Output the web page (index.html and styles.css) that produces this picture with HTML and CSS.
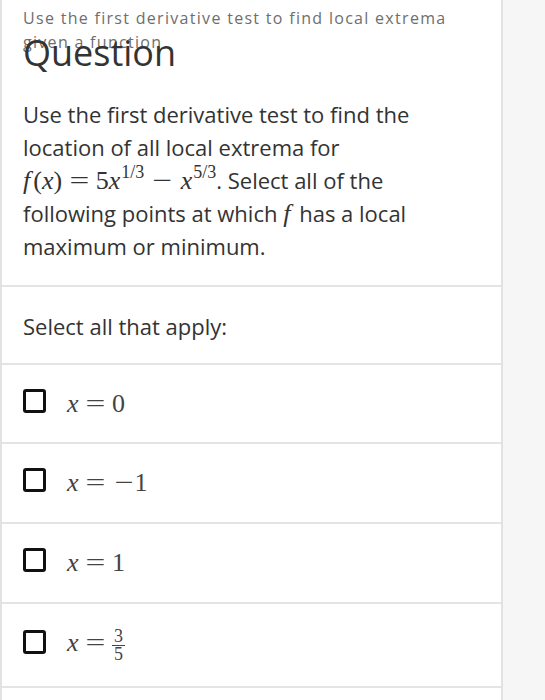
FILE: index.html
```html
<!DOCTYPE html>
<html lang="en">
<head>
    <meta charset="UTF-8">
    <meta name="viewport" content="width=device-width, initial-scale=1.0">
    <title>Question</title>
    <link rel="stylesheet" href="styles.css">
</head>
<body>
    <div class="page">
        <!-- Question block -->
        <section class="panel question">
            <div class="topic">Use the first derivative test to find local extrema given a function</div>
            <h1 class="heading">Question</h1>
            <p class="prompt">
                Use the first derivative test to find the location of all local extrema for
                <span class="math formula"><i class="fn">f</i>(<i>x</i>)<span class="op">=</span>5<i>x</i><sup>1/3</sup><span class="op bin">−</span><i>x</i><sup>5/3</sup></span>. Select all of the following points at which <span class="math"><i class="fn">f</i></span> has a local maximum or minimum.
            </p>
        </section>

        <!-- Answer choices -->
        <section class="panel instructions">
            <p>Select all that apply:</p>
        </section>
        <label class="panel choice first">
            <span class="box"></span>
            <span class="math"><i>x</i><span class="op">=</span>0</span>
        </label>
        <label class="panel choice">
            <span class="box"></span>
            <span class="math"><i>x</i><span class="op">=</span><span class="minus">−</span>1</span>
        </label>
        <label class="panel choice">
            <span class="box"></span>
            <span class="math"><i>x</i><span class="op">=</span>1</span>
        </label>
        <label class="panel choice last">
            <span class="box"></span>
            <span class="math"><i>x</i><span class="op">=</span><span class="frac"><span>3</span><span class="den">5</span></span></span>
        </label>
    </div>
</body>
</html>
```

FILE: styles.css
```css
/* Reset */
* {
    margin: 0;
    padding: 0;
    box-sizing: border-box;
}
body {
    font-family: "Open Sans", Arial, sans-serif;
    background-color: #f6f6f6;
    color: #333;
}
.page {
    width: 503px;
    background-color: #fff;
    border-left: 2px solid #e2e2e2;
    border-right: 2px solid #e2e2e2;
    min-height: 700px;
}
/* Panels */
.panel {
    display: block;
    border-bottom: 2px solid #e4e4e4;
    padding: 0 21px;
}
.question {
    height: 287px;
    padding-top: 6px;
    padding-right: 52px;
}
.topic {
    font-size: 16px;
    line-height: 24px;
    letter-spacing: 1.3px;
    color: #6e6e6e;
    height: 27px;
}
.heading {
    font-size: 36px;
    font-weight: normal;
    line-height: 40px;
    color: #333;
}
.prompt {
    margin-top: 25px;
    font-size: 22px;
    line-height: 33px;
    color: #333;
}
/* Math (MathJax-like) */
.math {
    font-family: "Liberation Serif", "Times New Roman", serif;
    font-size: 26px;
    color: #333;
}
.formula {
    white-space: nowrap;
}
.math .fn {
    margin-right: 0.12em;
}
.math .op {
    display: inline-block;
    transform: scaleX(1.35);
    margin: 0 0.36em;
}
.math .bin {
    margin: 0 0.42em;
}
.math .minus {
    display: inline-block;
    transform: scaleX(1.3);
    margin: 0 0.12em 0 0.18em;
}
.math sup {
    font-size: 18px;
    line-height: 0;
    vertical-align: 11px;
    margin-left: 1px;
}
.instructions {
    height: 78px;
    padding-top: 24px;
}
.instructions p {
    font-size: 22px;
    line-height: 30px;
}
/* Choice rows */
.choice {
    height: 80px;
    display: flex;
    align-items: center;
    gap: 21px;
    cursor: pointer;
}
.choice.first {
    height: 79px;
}
.choice.last {
    height: 84px;
}
.box {
    width: 23px;
    height: 24px;
    border: 3px solid #111;
    border-radius: 3px;
    margin-top: -6px;
}
.choice .math {
    color: #444;
}
.frac {
    display: inline-flex;
    flex-direction: column;
    align-items: center;
    vertical-align: middle;
    font-size: 18px;
    line-height: 17px;
}
.frac .den {
    border-top: 1px solid #444;
    padding: 0 2px;
}
```
